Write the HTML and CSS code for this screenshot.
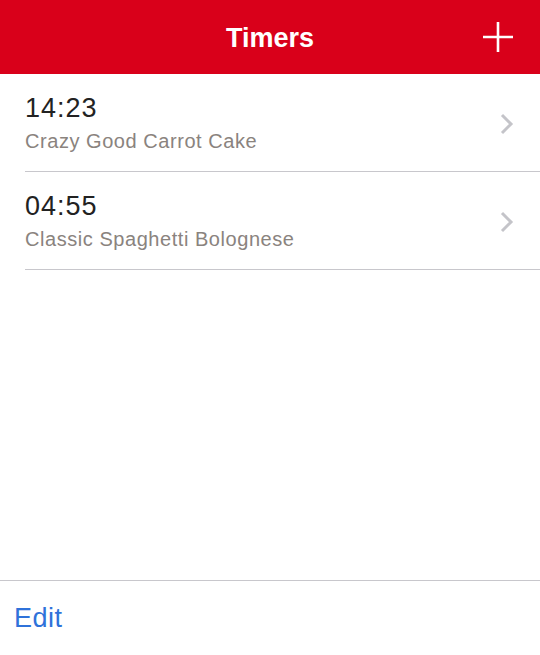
FILE: index.html
```html
<!DOCTYPE html>
<html lang="en">
<head>
    <meta charset="UTF-8">
    <meta name="viewport" content="width=device-width, initial-scale=1.0">
    <title>Timers</title>
    <link rel="stylesheet" href="styles.css">
</head>
<body>
    <header class="nav-bar">
        <h1 class="nav-title">Timers</h1>
        <button class="add-button" aria-label="Add timer">
            <svg width="30" height="30" viewBox="0 0 30 30">
                <path d="M15 0 V30 M0 15 H30" stroke="#fff" stroke-width="2.6" fill="none"/>
            </svg>
        </button>
    </header>

    <main class="timer-list">
        <div class="timer-row">
            <div class="timer-text">
                <div class="timer-time">14:23</div>
                <div class="timer-name">Crazy Good Carrot Cake</div>
            </div>
            <svg class="chevron" width="14" height="22" viewBox="0 0 14 22">
                <path d="M2 2 L11 11 L2 20" stroke="#c4c4c9" stroke-width="3" fill="none"/>
            </svg>
        </div>
        <div class="timer-row">
            <div class="timer-text">
                <div class="timer-time">04:55</div>
                <div class="timer-name">Classic Spaghetti Bolognese</div>
            </div>
            <svg class="chevron" width="14" height="22" viewBox="0 0 14 22">
                <path d="M2 2 L11 11 L2 20" stroke="#c4c4c9" stroke-width="3" fill="none"/>
            </svg>
        </div>
    </main>

    <footer class="toolbar">
        <button class="edit-button">Edit</button>
    </footer>
</body>
</html>
```

FILE: styles.css
```css
body {
    margin: 0;
    height: 100vh;
    display: flex;
    flex-direction: column;
    background-color: #fff;
    font-family: 'Liberation Sans', Arial, sans-serif;
}

.nav-bar {
    height: 74px;
    flex-shrink: 0;
    background-color: #d9001a;
    display: flex;
    align-items: center;
    justify-content: center;
    position: relative;
}

.nav-title {
    margin: 0;
    color: #fff;
    font-size: 27px;
    font-weight: bold;
    line-height: 1;
    margin-top: 2px;
}

.add-button {
    position: absolute;
    right: 27px;
    top: 22px;
    padding: 0;
    border: none;
    background: none;
    display: flex;
    cursor: pointer;
}

.timer-list {
    flex: 1;
    padding-left: 25px;
}

.timer-row {
    display: flex;
    align-items: center;
    justify-content: space-between;
    padding: 18px 26px 17px 0;
    border-bottom: 1px solid #c8c7cc;
}

.timer-time {
    font-size: 27px;
    line-height: 32px;
    color: #222;
    letter-spacing: 1px;
}

.timer-name {
    margin-top: 4px;
    font-size: 20px;
    line-height: 26px;
    color: #8a837e;
    letter-spacing: 0.55px;
}

.chevron {
    display: block;
    margin-top: 2px;
}

.toolbar {
    height: 74px;
    flex-shrink: 0;
    border-top: 1px solid #c8c7cc;
    display: flex;
    align-items: center;
    padding-left: 14px;
}

.edit-button {
    padding: 0;
    border: none;
    background: none;
    font-family: inherit;
    font-size: 27px;
    color: #2f72da;
    letter-spacing: 0.5px;
    cursor: pointer;
}
```
